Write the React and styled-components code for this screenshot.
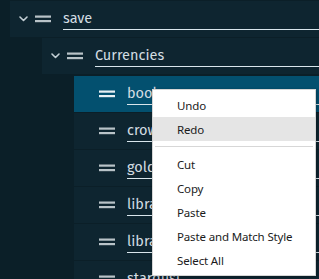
import React from "react";
import styled, { createGlobalStyle } from "styled-components";

const GlobalStyle = createGlobalStyle`
  html, body { margin: 0; padding: 0; background: #0b1f28; overflow: hidden; }
  body { width: 319px; height: 279px; position: relative; }
`;

const Page = styled.div`
  position: relative;
  width: 319px;
  height: 279px;
  overflow: hidden;
  background: #0b1f28;
`;

const Tree = styled.div`
  display: flex;
  flex-direction: column;
  padding: 1px 0 0 10px;
`;

const NodeWrap = styled.div`
  display: flex;
  flex-direction: column;
  gap: 1px;
`;

const Children = styled.div`
  display: flex;
  flex-direction: column;
  gap: 1px;
  margin-left: 32px;
  margin-top: ${(p) => p.$top}px;
`;

const Row = styled.div`
  display: flex;
  align-items: center;
  height: 36px;
  background: ${(p) => (p.$selected ? "#03506f" : "#0e2530")};
  flex-shrink: 0;
`;

const ChevronSlot = styled.div`
  width: 25px;
  display: flex;
  justify-content: flex-start;
  padding-left: 9px;
  box-sizing: border-box;
`;

const HandleSlot = styled.div`
  width: 28px;
  display: flex;
  align-items: center;
`;

const Label = styled.div`
  flex: 1;
  font-family: "Fira Sans", "Lato", "Noto Sans", sans-serif;
  font-size: 14.5px;
  color: #d3dde2;
  height: 20px;
  line-height: 19px;
  border-bottom: 1.5px solid #d9e6ec;
  white-space: nowrap;
`;

const Chevron = () => (
  <svg width="9" height="6" viewBox="0 0 9 6">
    <path d="M1 1 L4.5 4.5 L8 1" fill="none" stroke="#c2ced4" strokeWidth="1.6" strokeLinecap="round" strokeLinejoin="round" />
  </svg>
);

const Handle = ({ light }) => (
  <svg width="16" height="8" viewBox="0 0 16 8">
    <rect x="0" y="0.5" width="16" height="2.2" fill={light ? "#e8f0f4" : "#b9c3c8"} />
    <rect x="0" y="5" width="16" height="2.2" fill={light ? "#e8f0f4" : "#b9c3c8"} />
  </svg>
);

const Menu = styled.div`
  position: absolute;
  left: 152px;
  top: 89px;
  width: 164px;
  box-sizing: border-box;
  background: #ffffff;
  border: 1px solid #d6d6d6;
  box-shadow: 1px 1px 3px rgba(0, 0, 0, 0.3);
  padding: 3px 0 3px;
  display: flex;
  flex-direction: column;
`;

const MenuItem = styled.div`
  height: 24px;
  line-height: 25px;
  padding-left: 24px;
  font-family: "Noto Sans", "Open Sans", sans-serif;
  font-size: 11.5px;
  letter-spacing: -0.15px;
  color: #1b1b1b;
  background: ${(p) => (p.$hover ? "#e5e5e5" : "transparent")};
  white-space: nowrap;
`;

const Separator = styled.div`
  height: 1px;
  margin: 5px 2px 5px;
  background: #d7d7d7;
`;

const TreeRow = ({ label, chevron, selected }) => (
  <Row $selected={selected}>
    <ChevronSlot>{chevron && <Chevron />}</ChevronSlot>
    <HandleSlot>
      <Handle light={selected} />
    </HandleSlot>
    <Label>{label}</Label>
  </Row>
);

const items = ["book", "crowns", "gold", "library", "library_books", "stardust"];

export default function App() {
  return (
    <Page>
      <GlobalStyle />
      <Tree>
        <NodeWrap>
          <TreeRow label="save" chevron />
          <Children $top={0}>
            <TreeRow label="Currencies" chevron />
            <Children $top={1}>
              {items.map((it, i) => (
                <TreeRow key={it} label={it} selected={i === 0} />
              ))}
            </Children>
          </Children>
        </NodeWrap>
      </Tree>
      <Menu>
        <MenuItem>Undo</MenuItem>
        <MenuItem $hover>Redo</MenuItem>
        <Separator />
        <MenuItem>Cut</MenuItem>
        <MenuItem>Copy</MenuItem>
        <MenuItem>Paste</MenuItem>
        <MenuItem>Paste and Match Style</MenuItem>
        <MenuItem>Select All</MenuItem>
      </Menu>
    </Page>
  );
}
